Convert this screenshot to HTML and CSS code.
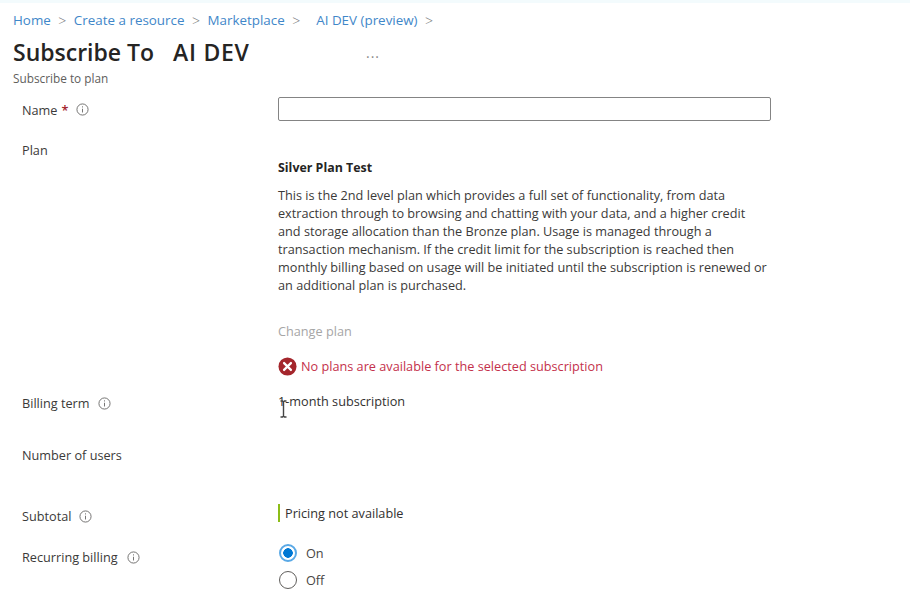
FILE: index.html
```html
<!DOCTYPE html>
<html lang="en">
<head>
  <meta charset="UTF-8" />
  <meta name="viewport" content="width=device-width, initial-scale=1.0" />
  <title>Subscribe To AI DEV</title>
  <link rel="stylesheet" href="styles.css">
</head>
<body>
  <nav class="breadcrumb">
    <a>Home</a><span class="chev">&gt;</span>
    <a>Create a resource</a><span class="chev">&gt;</span>
    <a>Marketplace</a><span class="chev chev-wide">&gt;</span>
    <a>AI DEV (preview)</a><span class="chev">&gt;</span>
  </nav>

  <header class="page-head">
    <div class="title-row">
      <h1>Subscribe To <span class="title-name">AI DEV</span></h1>
      <span class="more">...</span>
    </div>
    <div class="subtitle">Subscribe to plan</div>
  </header>

  <main class="form">
    <div class="row row-name">
      <div class="label label-name">Name <span class="req">*</span>
        <svg class="info" viewBox="0 0 14 14"><circle cx="7" cy="7" r="6" /><path d="M7 6.2v4M7 3.6v1.2" /></svg>
      </div>
      <div class="field"><input type="text" class="text-input" /></div>
    </div>

    <div class="row row-plan">
      <div class="label">Plan</div>
      <div class="field">
        <h2 class="plan-name">Silver Plan Test</h2>
        <p class="plan-desc">This is the 2nd level plan which provides a full set of functionality, from data<br>extraction through to browsing and chatting with your data, and a higher credit<br>and storage allocation than the Bronze plan. Usage is managed through a<br>transaction mechanism. If the credit limit for the subscription is reached then<br>monthly billing based on usage will be initiated until the subscription is renewed or<br>an additional plan is purchased.</p>
        <div class="change-plan">Change plan</div>
        <div class="error">
          <svg class="error-icon" viewBox="0 0 20 20"><circle cx="10" cy="10" r="9.5" /><path d="M6.4 6.4l7.2 7.2M13.6 6.4l-7.2 7.2" /></svg>
          No plans are available for the selected subscription
        </div>
      </div>
    </div>

    <div class="row row-term">
      <div class="label">Billing term
        <svg class="info" viewBox="0 0 14 14"><circle cx="7" cy="7" r="6" /><path d="M7 6.2v4M7 3.6v1.2" /></svg>
      </div>
      <div class="field term-value">1-month subscription
        <svg class="cursor" viewBox="0 0 9 18"><path d="M1.500 1h2l1 1 1-1h2M4.500 2v14M1.500 17h2l1-1 1 1h2" /></svg>
      </div>
    </div>

    <div class="row row-users">
      <div class="label">Number of users</div>
    </div>

    <div class="row row-subtotal">
      <div class="label">Subtotal
        <svg class="info" viewBox="0 0 14 14"><circle cx="7" cy="7" r="6" /><path d="M7 6.2v4M7 3.6v1.2" /></svg>
      </div>
      <div class="field"><div class="pricing">Pricing not available</div></div>
    </div>

    <div class="row row-billing">
      <div class="label">Recurring billing
        <svg class="info info-wide" viewBox="0 0 14 14"><circle cx="7" cy="7" r="6" /><path d="M7 6.2v4M7 3.6v1.2" /></svg>
      </div>
      <div class="field radios">
        <div class="radio-line"><span class="radio radio-on"></span>On</div>
        <div class="radio-line"><span class="radio"></span>Off</div>
      </div>
    </div>
  </main>
</body>
</html>
```

FILE: styles.css
```css
body {
  margin: 0;
  height: 611px;
  overflow: hidden;
  background-color: #fff;
  color: #323130;
  font-family: "Open Sans", "Noto Sans", sans-serif;
  font-size: 12.7px;
  border-top: 3px solid #f3fbfd;
  box-sizing: border-box;
}

.breadcrumb {
  display: flex;
  align-items: center;
  height: 20px;
  margin-top: 7px;
  padding-left: 13px;
  font-size: 13.4px;
  color: #3f87c9;
}

.chev {
  margin: 0 7.5px;
  color: #77787a;
  font-size: 14px;
  font-weight: 300;
}

.chev-wide {
  margin-right: 16px;
}

.page-head {
  padding-left: 13px;
}

.title-row {
  display: flex;
  align-items: center;
  height: 32px;
  margin-top: 6px;
}

h1 {
  margin: 0;
  width: 353px;
  font-size: 23px;
  font-weight: 600;
  color: #252423;
}

.title-name {
  margin-left: 13px;
  letter-spacing: 0.7px;
}

.more {
  color: #8a8886;
  font-size: 14px;
  letter-spacing: 1px;
}

.subtitle {
  font-size: 11.8px;
  line-height: 16px;
  margin-top: 2px;
  color: #605e5c;
}

.form {
  padding-left: 22px;
}

.row {
  display: flex;
}

.label {
  width: 256px;
  flex: none;
  display: flex;
  align-items: center;
  gap: 4px;
  height: 18px;
  color: #3b3a39;
}

.label-name {
  margin-top: 1px;
}

.req {
  color: #a4262c;
  font-weight: 600;
}

.info {
  width: 13px;
  height: 13px;
  margin-left: 4px;
  fill: none;
  stroke: #6b6a69;
  stroke-width: 1;
}

.info-wide {
  margin-left: 5px;
}

.row-name {
  margin-top: 11px;
  align-items: center;
}

.text-input {
  display: block;
  width: 493px;
  height: 24px;
  box-sizing: border-box;
  border: 1px solid #848484;
  border-radius: 2px;
  background: #fff;
}

.row-plan {
  margin-top: 20px;
}

.plan-name {
  margin: 18px 0 0;
  font-size: 12.4px;
  line-height: 18px;
  font-weight: 700;
  color: #252423;
}

.plan-desc {
  margin: 9px 0 0;
  line-height: 18px;
  white-space: nowrap;
  color: #3b3a39;
}

.change-plan {
  margin-top: 28px;
  line-height: 18px;
  color: #a6a6a6;
}

.error {
  display: flex;
  align-items: center;
  gap: 4px;
  margin-top: 16px;
  height: 20px;
  color: #c4314b;
}

.error-icon {
  width: 19px;
  height: 19px;
}

.error-icon circle {
  fill: #a4262c;
}

.error-icon path {
  stroke: #fff;
  stroke-width: 2.400;
  stroke-linecap: round;
}

.row-term {
  margin-top: 18px;
}

.term-value {
  position: relative;
  margin-top: -2px;
  line-height: 18px;
}

/* mouse pointer caught in the screenshot */
.cursor {
  position: absolute;
  left: 1px;
  top: 8px;
  width: 9px;
  height: 18px;
  fill: none;
  stroke: #444;
  stroke-width: 1.400;
}

.row-users {
  margin-top: 34px;
}

.row-subtotal {
  margin-top: 43px;
}

.pricing {
  margin-top: -3px;
  padding-left: 5px;
  height: 18px;
  line-height: 18px;
  border-left: 2px solid #8cbd18;
}

.row-billing {
  margin-top: 23px;
}

.radios {
  margin-top: -9px;
}

.radio-line {
  display: flex;
  align-items: center;
  gap: 9px;
  height: 27px;
  margin-left: 1px;
  color: #484644;
}

.radio {
  width: 18px;
  height: 18px;
  box-sizing: border-box;
  border: 1.500px solid #605e5c;
  border-radius: 50%;
  background: #fff;
}

.radio-on {
  border: 2px solid #5aa9e6;
  background: radial-gradient(circle, #0078d4 0 4.500px, #fff 5px);
}
```
